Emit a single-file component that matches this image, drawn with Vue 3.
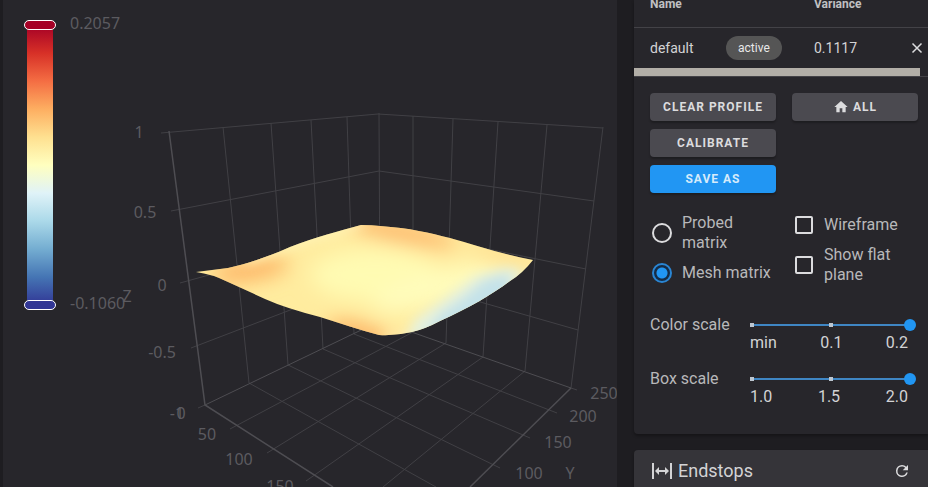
<script setup>
import { ref } from 'vue'

const matrix = ref('mesh')
const wireframe = ref(false)
const flatPlane = ref(false)

const sliders = ref([
  { id: 'color-scale', label: 'Color scale', value: 2, marks: ['min', '0.1', '0.2'] },
  { id: 'box-scale', label: 'Box scale', value: 2, marks: ['1.0', '1.5', '2.0'] },
])

const stops = [
  [0, '#a50026'], [10, '#d73027'], [20, '#f46d43'], [30, '#fdae61'], [40, '#fee090'], [50, '#ffffbf'],
  [60, '#e0f3f8'], [70, '#abd9e9'], [80, '#74add1'], [90, '#4575b4'], [100, '#313695'],
]

const axisLabels = [
  [139, 132, '1'], [145, 212, '0.5'], [162, 285, '0'], [162, 352, '-0.5'], [177, 413, '-1'], [181, 413, '0'],
  [207, 434, '50'], [239, 459, '100'], [280, 486, '150'],
  [604, 393, '250'], [583, 416, '200'], [558, 442, '150'], [529, 473, '100'], [570, 473, 'Y'], [127, 296, 'Z'],
]

const gridLines = [
  // left wall
  'M161 133 L378 114', 'M171 211 L379 171', 'M180 283 L379 228', 'M191 348 L379 276', 'M198 408 L205 405',
  'M223 127 L249 383', 'M271 123 L288 365', 'M311 120 L323 349', 'M347 117 L354 334',
  // right wall
  'M378 114 L603 128', 'M379 171 L594 201', 'M379 227 L586 269', 'M379 273 L578 330',
  'M379 113 L380 320', 'M413 116 L413 332', 'M453 119 L446 343', 'M498 122 L483 357', 'M547 125 L525 371', 'M603 127 L571 388',
  // floor
  'M249 383 L436 487', 'M288 365 L500 468', 'M323 349 L530 438', 'M354 334 L557 413', 'M571 388 L577 390',
  'M525 371 L383 487', 'M483 357 L306 481', 'M446 343 L267 453', 'M413 332 L230 429',
]
</script>

<template>
  <div class="layout">
    <main class="chart-card">
      <svg class="chart" viewBox="3 0 614 487" preserveAspectRatio="xMinYMin meet" role="img" aria-label="Bed mesh surface">
        <defs>
          <linearGradient id="scale" x1="0" y1="0" x2="0" y2="1">
            <stop v-for="s in stops" :key="s[0]" :offset="s[0] + '%'" :stop-color="s[1]" />
          </linearGradient>
          <clipPath id="surface">
            <path d="M196 272 L228 268 C250 263 270 256 290 247 C315 237 340 231 361 225 Q372 225 380 226 C410 228 430 233 450 238 C475 245 505 255 533 260 Q523 273 510 281 C490 296 470 307 440 321 Q425 329 412 332 Q395 336 379 335 C360 330 340 323 320 317 Q285 308 265 299 L228 282 Q212 274 196 272Z" />
          </clipPath>
          <filter id="soft" x="-80%" y="-200%" width="260%" height="500%"><feGaussianBlur stdDeviation="10" /></filter>
          <filter id="soft-small" x="-60%" y="-60%" width="220%" height="220%"><feGaussianBlur stdDeviation="6" /></filter>
        </defs>

        <g class="grid">
          <path v-for="d in gridLines" :key="d" :d="d" />
        </g>
        <g class="axes">
          <path d="M169 131 L205 405 L333 487" />
          <path d="M571 388 L470 487" />
          <path class="thin" d="M205 405 L380 321 L571 388" />
        </g>

        <g clip-path="url(#surface)">
          <rect x="190" y="220" width="350" height="120" fill="#ffec9f" />
          <g filter="url(#soft)">
            <ellipse cx="375" cy="275" rx="64" ry="26" fill="#fffbb2" />
            <ellipse cx="435" cy="288" rx="64" ry="17" transform="rotate(-16 435 288)" fill="#fffcbb" />
            <ellipse cx="250" cy="270" rx="40" ry="11" transform="rotate(-10 250 270)" fill="#fdb465" />
            <ellipse cx="402" cy="233" rx="56" ry="9" transform="rotate(12 402 233)" fill="#fdb468" />
            <ellipse cx="360" cy="334" rx="34" ry="10" transform="rotate(16 360 334)" fill="#fdae61" />
            <ellipse cx="500" cy="255" rx="34" ry="6" transform="rotate(14 500 255)" fill="#fedb8c" />
          </g>
          <g filter="url(#soft-small)">
            <path d="M405 344 L414 320 L445 298 L475 276 L505 267 L524 270 L508 304 L450 334 Z" fill="#e6f2de" />
            <path d="M420 340 L440 314 L462 299 L484 280 L510 273 L510 296 L474 318 Z" fill="#c4e2e9" />
            <ellipse cx="396" cy="337" rx="12" ry="6" fill="#feeba8" />
            <path d="M240 258 L300 234 L362 219 L362 226 L302 243 L248 263 Z" fill="#fff6bd" />
          </g>
        </g>

        <g class="labels">
          <text v-for="(l, i) in axisLabels" :key="i" :x="l[0]" :y="l[1] + 6" text-anchor="middle">{{ l[2] }}</text>
          <text x="70" y="29">0.2057</text>
          <text x="70" y="309">-0.1060</text>
        </g>

        <rect x="27" y="25" width="26" height="280" fill="url(#scale)" />
        <rect class="handle" x="24.5" y="20.5" width="31" height="9" rx="4.5" fill="#a50026" />
        <rect class="handle" x="24.5" y="300.5" width="31" height="9" rx="4.5" fill="#313695" />
      </svg>
    </main>

    <aside class="side">
      <section class="card settings">
        <table>
          <thead>
            <tr><th class="name">Name</th><th class="state"></th><th>Variance</th><th></th></tr>
          </thead>
          <tbody>
            <tr>
              <td>default</td>
              <td><span class="chip">active</span></td>
              <td>0.1117</td>
              <td class="remove">
                <button class="icon-button" aria-label="Remove profile">
                  <svg width="12" height="12" viewBox="0 0 12 12"><path d="M1.5 1.5 L10.5 10.5 M10.5 1.5 L1.5 10.5" stroke="currentColor" stroke-width="1.5" /></svg>
                </button>
              </td>
            </tr>
          </tbody>
        </table>
        <div class="scroll-track"><div class="scroll-thumb"></div></div>

        <div class="columns actions">
          <div class="stack">
            <button class="button">CLEAR PROFILE</button>
            <button class="button">CALIBRATE</button>
            <button class="button primary">SAVE AS</button>
          </div>
          <div class="stack">
            <button class="button">
              <svg width="16" height="16" viewBox="0 0 24 24"><path fill="currentColor" d="M10 20v-6h4v6h5v-8h3L12 3 2 12h3v8z" /></svg>
              ALL
            </button>
          </div>
        </div>

        <div class="columns options">
          <div class="choices">
            <label class="choice"><input v-model="matrix" type="radio" name="matrix" value="probed" /><span>Probed matrix</span></label>
            <label class="choice"><input v-model="matrix" type="radio" name="matrix" value="mesh" /><span>Mesh matrix</span></label>
          </div>
          <div class="choices toggles">
            <label class="choice"><input v-model="wireframe" type="checkbox" /><span>Wireframe</span></label>
            <label class="choice"><input v-model="flatPlane" type="checkbox" /><span>Show flat plane</span></label>
          </div>
        </div>

        <div class="sliders">
          <div v-for="s in sliders" :key="s.id" class="slider-row">
            <label :for="s.id">{{ s.label }}</label>
            <div>
              <input :id="s.id" v-model="s.value" type="range" min="0" max="2" step="1" />
              <div class="marks"><span v-for="m in s.marks" :key="m">{{ m }}</span></div>
            </div>
          </div>
        </div>
      </section>

      <section class="card endstops">
        <h2>
          <svg width="20" height="16" viewBox="0 0 20 16" fill="currentColor">
            <path d="M0 0h2v16H0zM18 0h2v16h-2zM3 8l4-4v3h6V4l4 4-4 4V9H7v3z" />
          </svg>
          Endstops
        </h2>
        <button class="icon-button" aria-label="Refresh endstops">
          <svg width="18" height="18" viewBox="0 0 24 24"><path fill="currentColor" d="M17.65 6.35A7.96 7.96 0 0 0 12 4a8 8 0 1 0 7.73 10h-2.08A6 6 0 1 1 12 6c1.66 0 3.14.69 4.22 1.78L13 11h7V4z" /></svg>
        </button>
      </section>
    </aside>
  </div>
</template>

<style>
body {
  margin: 0;
  background: #1e1d21;
}
</style>

<style scoped>
* {
  box-sizing: border-box;
}
.layout {
  display: grid;
  grid-template-columns: minmax(0, 1fr) 294px;
  gap: 17px;
  padding-left: 3px;
  height: 100vh;
  overflow: hidden;
  background: #1e1d21;
  color: #d3d3d5;
  font: 16px/20px Roboto, sans-serif;
}
.chart-card,
.card {
  background: #27262b;
}
.chart {
  display: block;
  width: 100%;
}
.grid path {
  fill: none;
  stroke: #414045;
  stroke-width: 1;
}
.axes path {
  fill: none;
  stroke: #4e4d52;
  stroke-width: 1.5;
}
.axes .thin {
  stroke-width: 1;
}
.labels {
  fill: #5c5b60;
  font: 16px "Noto Sans", "Open Sans", sans-serif;
}
.handle {
  stroke: #fff;
  stroke-width: 1;
}
.side {
  display: flex;
  flex-direction: column;
  gap: 16px;
}
.card {
  box-shadow: 0 2px 3px rgba(0, 0, 0, 0.3);
}
.settings {
  border-radius: 0 0 0 4px;
  padding-bottom: 27px;
}
table {
  width: 100%;
  table-layout: fixed;
  border-collapse: separate;
  border-spacing: 0;
}
th {
  height: 28px;
  padding: 0 0 19px 16px;
  border-bottom: 1px solid #434247;
  font-size: 12px;
  line-height: 8px;
  text-align: left;
  color: #c0c0c2;
}
.name {
  width: 76px;
}
.state {
  width: 88px;
}
td {
  height: 40px;
  padding: 0 0 0 16px;
  font-size: 14px;
}
.chip {
  display: inline-block;
  padding: 0 12px;
  border-radius: 12px;
  background: #555555;
  color: #e8e8e8;
  font-size: 12px;
  line-height: 24px;
}
.icon-button {
  display: inline-flex;
  padding: 0;
  border: 0;
  background: none;
  color: #dcdcde;
}
.remove {
  padding-right: 5px;
  line-height: 12px;
  text-align: right;
}
.remove .icon-button {
  vertical-align: top;
}
.scroll-track {
  border-bottom: 1px solid #434247;
  margin-bottom: 16px;
}
.scroll-thumb {
  width: calc(100% - 8px);
  height: 8px;
  background: #b2aea7;
}
.columns {
  display: grid;
  grid-template-columns: 1fr 1fr;
  gap: 16px;
  padding: 0 10px 0 16px;
}
.stack {
  display: flex;
  flex-direction: column;
  gap: 8px;
}
.button {
  display: flex;
  align-items: center;
  justify-content: center;
  gap: 4px;
  height: 28px;
  padding: 0;
  border: 0;
  border-radius: 4px;
  background: #4b4a50;
  box-shadow: 0 2px 2px rgba(0, 0, 0, 0.25);
  color: #dcdcde;
  font: 700 12px/16px Roboto, sans-serif;
  letter-spacing: 1px;
}
.primary {
  background: #2196f3;
  color: #d5ebfb;
}
.options {
  margin-top: 20px;
  color: #b8b8ba;
}
.choices {
  display: flex;
  flex-direction: column;
  gap: 10px;
}
.toggles {
  padding-top: 2px;
}
.choice {
  display: flex;
  align-items: center;
  gap: 8px;
}
.choice input {
  appearance: none;
  flex: none;
  margin: 0 3px;
  width: 18px;
  height: 18px;
  border: 2px solid #dcdcde;
  border-radius: 2px;
}
.choice input[type="radio"] {
  margin: 0 2px;
  width: 20px;
  height: 20px;
  border-radius: 50%;
}
.choice input[type="radio"]:checked {
  border-color: #2a86d4;
  background: radial-gradient(circle, #2196f3 5px, #152c46 6px);
}
.sliders {
  display: flex;
  flex-direction: column;
  gap: 18px;
  padding: 0 12px 0 16px;
  margin-top: 32px;
}
.slider-row {
  display: grid;
  grid-template-columns: 96px 1fr;
}
.slider-row label {
  color: #b8b8ba;
  line-height: 16px;
}
input[type="range"] {
  appearance: none;
  display: block;
  width: 100%;
  height: 16px;
  margin: 0;
  background:
    linear-gradient(#bcc6d0, #bcc6d0) 4px center / 4px 4px no-repeat,
    linear-gradient(#bcc6d0, #bcc6d0) center / 4px 4px no-repeat,
    linear-gradient(#3f86c4, #3f86c4) center / calc(100% - 12px) 2px no-repeat;
}
input[type="range"]::-webkit-slider-thumb {
  appearance: none;
  width: 12px;
  height: 12px;
  border-radius: 50%;
  background: #2196f3;
}
.marks {
  display: flex;
  justify-content: space-between;
  padding: 0 8px 0 4px;
}
.endstops {
  display: flex;
  align-items: center;
  justify-content: space-between;
  padding: 10px 17px 10px 18px;
  border-radius: 4px 0 0 0;
  background: #353439;
}
h2 {
  display: flex;
  align-items: center;
  gap: 6px;
  margin: 0;
  font-size: 18px;
  font-weight: 400;
  line-height: 22px;
}
</style>
